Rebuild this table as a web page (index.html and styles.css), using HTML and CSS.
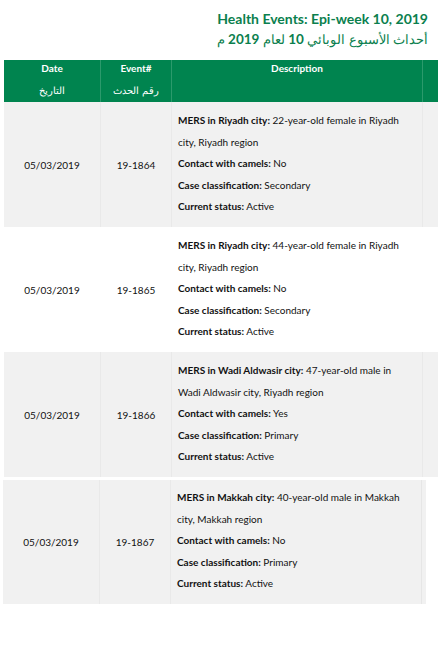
FILE: index.html
```html
<!DOCTYPE html>
<html lang="en">
<head>
<meta charset="utf-8">
<link rel="stylesheet" href="styles.css">
</head>
<body>
<div class="page">
  <header class="title">
    <h1 class="title-en">Health Events: Epi-week 10, 2019</h1>
    <p class="title-ar" dir="rtl">أحداث الأسبوع الوبائي <b>10</b> لعام <b>2019</b> م</p>
  </header>
  <div class="table">
    <div class="row head">
      <div class="cell c-date"><span>Date</span><span class="ar">التاريخ</span></div>
      <div class="cell c-event"><span>Event#</span><span class="ar">رقم الحدث</span></div>
      <div class="cell c-desc"><span>Description</span></div>
      <div class="cell c-extra"></div>
    </div>
    <div class="row body grey">
      <div class="cell c-date">05/03/2019</div>
      <div class="cell c-event">19-1864</div>
      <div class="cell c-desc">
        <p><b>MERS in Riyadh city:</b> 22-year-old female in Riyadh city, Riyadh region</p>
        <p><b>Contact with camels:</b> No</p>
        <p><b>Case classification:</b> Secondary</p>
        <p><b>Current status:</b> Active</p>
      </div>
      <div class="cell c-extra"></div>
    </div>
    <div class="row body white">
      <div class="cell c-date">05/03/2019</div>
      <div class="cell c-event">19-1865</div>
      <div class="cell c-desc">
        <p><b>MERS in Riyadh city:</b> 44-year-old female in Riyadh city, Riyadh region</p>
        <p><b>Contact with camels:</b> No</p>
        <p><b>Case classification:</b> Secondary</p>
        <p><b>Current status:</b> Active</p>
      </div>
      <div class="cell c-extra"></div>
    </div>
    <div class="row body grey">
      <div class="cell c-date">05/03/2019</div>
      <div class="cell c-event">19-1866</div>
      <div class="cell c-desc">
        <p><b>MERS in Wadi Aldwasir city:</b> 47-year-old male in Wadi Aldwasir city, Riyadh region</p>
        <p><b>Contact with camels:</b> Yes</p>
        <p><b>Case classification:</b> Primary</p>
        <p><b>Current status:</b> Active</p>
      </div>
      <div class="cell c-extra"></div>
    </div>
    <div class="row body grey last">
      <div class="cell c-date">05/03/2019</div>
      <div class="cell c-event">19-1867</div>
      <div class="cell c-desc">
        <p><b>MERS in Makkah city:</b> 40-year-old male in Makkah city, Makkah region</p>
        <p><b>Contact with camels:</b> No</p>
        <p><b>Case classification:</b> Primary</p>
        <p><b>Current status:</b> Active</p>
      </div>
      <div class="cell c-extra"></div>
    </div>
  </div>
</div>
</body>
</html>
```
FILE: styles.css
```css
html, body {
  margin: 0;
  padding: 0;
  background: #ffffff;
}
body {
  font-family: Lato, "Noto Sans", "Liberation Sans", sans-serif;
  color: #111;
  overflow: hidden;
  width: 438px;
  height: 656px;
}
.page {
  padding-top: 10px;
}
.title {
  padding-right: 10px;
  color: #0b7f4e;
}
.title-en {
  margin: 0;
  font-size: 14px;
  font-weight: 700;
  line-height: 18px;
  text-align: right;
}
.title-ar {
  margin: 1px 0 0;
  font-family: "Noto Sans", sans-serif;
  font-size: 13px;
  line-height: 20px;
  text-align: start;
}
.title-ar b { font-family: Lato, sans-serif; font-weight: 700; font-size: 13.5px; }
.table {
  margin-top: 11px;
  padding-left: 4px;
  display: flex;
  flex-direction: column;
}
.row {
  display: grid;
  grid-template-columns: 96px 71px 251px 16px;
}
.head {
  background: #00844f;
  color: #fff;
  font-weight: 700;
  font-size: 10px;
  height: 42px;
}
.head .cell {
  display: flex;
  flex-direction: column;
  align-items: center;
  line-height: 16px;
  border-left: 1px solid #2b9a6c;
}
.head .c-date { border-left: none; }
.head .ar {
  margin-top: 6px;
  font-family: "Noto Sans", sans-serif;
  font-weight: 400;
  font-size: 10px;
}
.body {
  font-size: 10px;
}
.grey { background: #f1f1f1; }
.white { background: #ffffff; }
.body .cell {
  border-left: 1px solid #e9e9e9;
}
.white .cell { border-left-color: #ffffff; }
.body .c-date { border-left: none; }
.body .c-date, .body .c-event {
  display: flex;
  align-items: center;
  justify-content: center;
}
.body .c-desc {
  padding: 8px 8px 9.5px 6px;
  line-height: 21.5px;
}
.c-desc p { margin: 0; }
.c-desc b { font-weight: 700; }
.last {
  margin: 3px 0 0 -1px;
  grid-template-columns: 96px 71px 251px 5px;
  width: 423px;
}
.last .c-desc { padding: 7px 8px 9.5px 6px; }
.last .c-extra { border-left-color: #e6e6e6; }
```
